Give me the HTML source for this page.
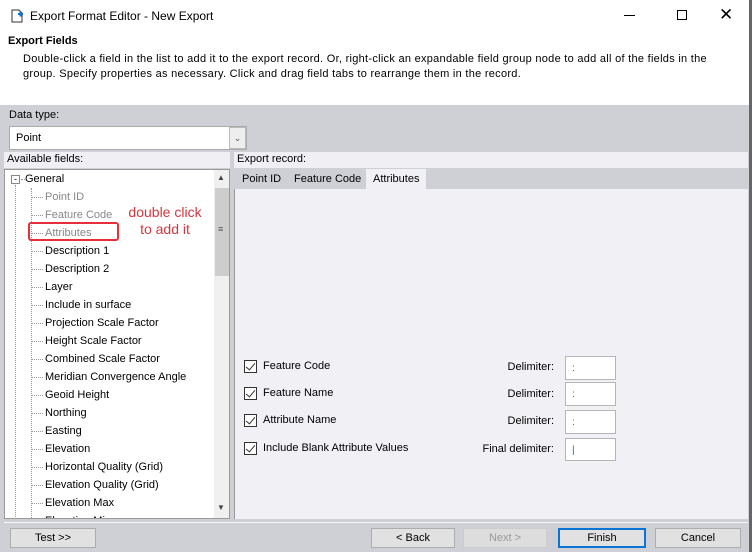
<!DOCTYPE html>
<html><head><style>
*{margin:0;padding:0;box-sizing:border-box}
body{width:752px;height:552px;overflow:hidden;font-family:"Liberation Sans",sans-serif;font-size:11px;color:#000;background:#cfd0d5;position:relative}
.a{position:absolute}
.btn{position:absolute;top:528px;height:20px;border:1px solid #adadad;background:#e1e1e1;text-align:center;line-height:18px;font-size:11px}
.tree div.t{position:absolute;left:40px;height:18px;line-height:18px;white-space:nowrap}
.tree div.t:before{content:"";position:absolute;left:-13px;top:9px;width:11px;border-top:1px dotted #999}
.cb{position:absolute;width:13px;height:13px;border:1px solid #333;background:#fff}
.cb:after{content:"";position:absolute;left:3px;top:0px;width:4px;height:8px;border:solid #333;border-width:0 1.5px 1.5px 0;transform:rotate(40deg)}
.inp{position:absolute;left:565px;width:51px;height:24px;border:1px solid #b5b5b5;background:#fff;padding:6px 0 0 6px;font-size:10px;color:#26a}
.lbl{position:absolute;right:198px;font-size:11px}
</style></head><body>
<div class="a" style="left:0;top:0;width:750px;height:105px;background:#fff"></div>
<div class="a" style="left:749px;top:0;width:3px;height:552px;background:#666"></div>
<svg class="a" style="left:10px;top:8px" width="14" height="15"><path d="M2 2h7l3 3v9H2z" fill="none" stroke="#333"/><path d="M8 6h5M10.5 3.5v5" stroke="#1a73c8" stroke-width="2"/></svg>
<div class="a" style="left:30px;top:9px;font-size:12px">Export Format Editor - New Export</div>
<div class="a" style="left:624px;top:15px;width:11px;height:1px;background:#000"></div>
<div class="a" style="left:677px;top:10px;width:10px;height:10px;border:1px solid #000"></div>
<div class="a" style="left:719px;top:5px;font-size:17px;line-height:20px">✕</div>
<div class="a" style="left:8px;top:35px;font-weight:bold;font-size:11px">Export Fields</div>
<div class="a" style="left:23px;top:52px;width:730px;line-height:15px;font-size:11px;white-space:nowrap;letter-spacing:0.28px">Double-click a field in the list to add it to the export record. Or, right-click an expandable field group node to add all of the fields in the<br>group. Specify properties as necessary. Click and drag field tabs to rearrange them in the record.</div>
<div class="a" style="left:9px;top:109px">Data type:</div>
<div class="a" style="left:9px;top:126px;width:238px;height:24px;border:1px solid #aaa;background:#fff;padding:5px 0 0 6px">Point</div>
<div class="a" style="left:229px;top:127px;width:17px;height:22px;border:1px solid #bbb;background:#eee;font-size:9px;text-align:center;line-height:20px;color:#555">&#8964;</div>
<div class="a" style="left:4px;top:152px;width:226px;height:16px;background:#f0f0f4;padding-left:3px;line-height:15px">Available fields:</div>
<div class="a" style="left:234px;top:152px;width:514px;height:16px;background:#f0f0f4;padding-left:3px;line-height:15px">Export record:</div>
<div class="a tree" style="left:4px;top:169px;width:226px;height:350px;background:#fff;border:1px solid #999;overflow:hidden">
<div class="a" style="left:6px;top:5px;width:9px;height:9px;border:1px solid #888;font-size:9px;line-height:6px;text-align:center">-</div>
<div class="a" style="left:10px;top:15px;height:340px;border-left:1px dotted #999;width:0"></div>
<div class="a" style="left:26px;top:18px;height:340px;border-left:1px dotted #999;width:0"></div>
<div class="a" style="left:16px;top:9px;width:4px;border-top:1px dotted #999"></div>
<div class="a" style="left:20px;top:0;line-height:18px">General</div>
<div class="t" style="top:18px;color:#888">Point ID</div>
<div class="t" style="top:36px;color:#888">Feature Code</div>
<div class="t" style="top:54px;color:#888">Attributes</div>
<div class="t" style="top:72px">Description 1</div>
<div class="t" style="top:90px">Description 2</div>
<div class="t" style="top:108px">Layer</div>
<div class="t" style="top:126px">Include in surface</div>
<div class="t" style="top:144px">Projection Scale Factor</div>
<div class="t" style="top:162px">Height Scale Factor</div>
<div class="t" style="top:180px">Combined Scale Factor</div>
<div class="t" style="top:198px">Meridian Convergence Angle</div>
<div class="t" style="top:216px">Geoid Height</div>
<div class="t" style="top:234px">Northing</div>
<div class="t" style="top:252px">Easting</div>
<div class="t" style="top:270px">Elevation</div>
<div class="t" style="top:288px">Horizontal Quality (Grid)</div>
<div class="t" style="top:306px">Elevation Quality (Grid)</div>
<div class="t" style="top:324px">Elevation Max</div>
<div class="t" style="top:342px">Elevation Min</div>
<div class="a" style="left:209px;top:0;width:16px;height:348px;background:#f0f0f0"></div>
<div class="a" style="left:210px;top:18px;width:14px;height:88px;background:#cdcdcd"></div>
<div class="a" style="left:212px;top:3px;font-size:8px;color:#444">▲</div>
<div class="a" style="left:212px;top:333px;font-size:8px;color:#444">▼</div>
<div class="a" style="left:213px;top:54px;font-size:9px;color:#555">≡</div>
</div>
<div class="a" style="left:28px;top:222px;width:91px;height:19px;border:2px solid #e5303a;border-radius:3px"></div>
<div class="a" style="left:123px;top:204px;color:#d0393f;font-size:14px;line-height:17px;text-align:center;width:84px">double click<br>to add it</div>
<div class="a" style="left:234px;top:169px;width:514px;height:20px;background:#cfd0d5"></div>
<div class="a" style="left:242px;top:173px">Point ID</div>
<div class="a" style="left:294px;top:173px">Feature Code</div>
<div class="a" style="left:366px;top:169px;width:60px;height:21px;background:#f0f0f5;padding:4px 0 0 7px">Attributes</div>
<div class="a" style="left:234px;top:189px;width:514px;height:330px;background:#f0f0f5;border-left:1px solid #999"></div>
<div class="cb" style="left:244px;top:360px"></div><div class="a" style="left:263px;top:360px">Feature Code</div>
<div class="cb" style="left:244px;top:387px"></div><div class="a" style="left:263px;top:387px">Feature Name</div>
<div class="cb" style="left:244px;top:414px"></div><div class="a" style="left:263px;top:414px">Attribute Name</div>
<div class="cb" style="left:244px;top:442px"></div><div class="a" style="left:263px;top:442px">Include Blank Attribute Values</div>
<div class="lbl" style="top:361px">Delimiter:</div><div class="inp" style="top:356px">:</div>
<div class="lbl" style="top:388px">Delimiter:</div><div class="inp" style="top:382px">:</div>
<div class="lbl" style="top:415px">Delimiter:</div><div class="inp" style="top:410px">:</div>
<div class="lbl" style="top:443px">Final delimiter:</div><div class="inp" style="top:438px;height:23px">|</div>
<div class="a" style="left:4px;top:522px;width:744px;height:1px;background:#f8f8f8"></div>
<div class="btn" style="left:10px;width:86px">Test &gt;&gt;</div>
<div class="btn" style="left:371px;width:84px">&lt; Back</div>
<div class="btn" style="left:463px;width:84px;color:#999;border-color:#ccc;background:#ddd">Next &gt;</div>
<div class="btn" style="left:558px;width:88px;border:2px solid #0a74d4;line-height:16px">Finish</div>
<div class="btn" style="left:655px;width:86px">Cancel</div>
</body></html>
